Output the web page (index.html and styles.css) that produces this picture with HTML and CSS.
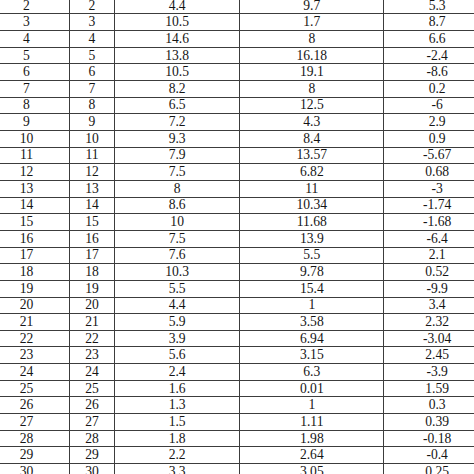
FILE: index.html
```html
<!DOCTYPE html>
<html>
<head>
<meta charset="utf-8">
<link rel="stylesheet" href="styles.css">
</head>
<body>
<div class="frame">
<table class="data">
<colgroup>
<col class="c1"><col class="c2"><col class="c3"><col class="c4"><col class="c5">
</colgroup>
<tbody>
<tr><td>2</td><td>2</td><td>4.4</td><td>9.7</td><td>5.3</td></tr>
<tr><td>3</td><td>3</td><td>10.5</td><td>1.7</td><td>8.7</td></tr>
<tr><td>4</td><td>4</td><td>14.6</td><td>8</td><td>6.6</td></tr>
<tr><td>5</td><td>5</td><td>13.8</td><td>16.18</td><td>-2.4</td></tr>
<tr><td>6</td><td>6</td><td>10.5</td><td>19.1</td><td>-8.6</td></tr>
<tr><td>7</td><td>7</td><td>8.2</td><td>8</td><td>0.2</td></tr>
<tr><td>8</td><td>8</td><td>6.5</td><td>12.5</td><td>-6</td></tr>
<tr><td>9</td><td>9</td><td>7.2</td><td>4.3</td><td>2.9</td></tr>
<tr><td>10</td><td>10</td><td>9.3</td><td>8.4</td><td>0.9</td></tr>
<tr><td>11</td><td>11</td><td>7.9</td><td>13.57</td><td>-5.67</td></tr>
<tr><td>12</td><td>12</td><td>7.5</td><td>6.82</td><td>0.68</td></tr>
<tr><td>13</td><td>13</td><td>8</td><td>11</td><td>-3</td></tr>
<tr><td>14</td><td>14</td><td>8.6</td><td>10.34</td><td>-1.74</td></tr>
<tr><td>15</td><td>15</td><td>10</td><td>11.68</td><td>-1.68</td></tr>
<tr><td>16</td><td>16</td><td>7.5</td><td>13.9</td><td>-6.4</td></tr>
<tr><td>17</td><td>17</td><td>7.6</td><td>5.5</td><td>2.1</td></tr>
<tr><td>18</td><td>18</td><td>10.3</td><td>9.78</td><td>0.52</td></tr>
<tr><td>19</td><td>19</td><td>5.5</td><td>15.4</td><td>-9.9</td></tr>
<tr><td>20</td><td>20</td><td>4.4</td><td>1</td><td>3.4</td></tr>
<tr><td>21</td><td>21</td><td>5.9</td><td>3.58</td><td>2.32</td></tr>
<tr><td>22</td><td>22</td><td>3.9</td><td>6.94</td><td>-3.04</td></tr>
<tr><td>23</td><td>23</td><td>5.6</td><td>3.15</td><td>2.45</td></tr>
<tr><td>24</td><td>24</td><td>2.4</td><td>6.3</td><td>-3.9</td></tr>
<tr><td>25</td><td>25</td><td>1.6</td><td>0.01</td><td>1.59</td></tr>
<tr><td>26</td><td>26</td><td>1.3</td><td>1</td><td>0.3</td></tr>
<tr><td>27</td><td>27</td><td>1.5</td><td>1.11</td><td>0.39</td></tr>
<tr><td>28</td><td>28</td><td>1.8</td><td>1.98</td><td>-0.18</td></tr>
<tr><td>29</td><td>29</td><td>2.2</td><td>2.64</td><td>-0.4</td></tr>
<tr><td>30</td><td>30</td><td>3.3</td><td>3.05</td><td>0.25</td></tr>
</tbody>
</table>
</div>
</body>
</html>
```
FILE: styles.css
```css
html, body {
  margin: 0;
  padding: 0;
  background: #ffffff;
}
body {
  width: 474px;
  height: 474px;
  overflow: hidden;
}
.frame {
  margin-top: -3.3px;
  margin-left: -17px;
}
.data {
  border-collapse: collapse;
  table-layout: fixed;
  width: 507px;
  font-family: "Liberation Serif", "Times New Roman", serif;
  font-size: 13.6px;
  color: #151515;
}
.c1 { width: 86px; }
.c2 { width: 45px; }
.c3 { width: 125.3px; }
.c4 { width: 144px; }
.c5 { width: 106.7px; }
.data tr {
  height: 16.667px;
}
.data td {
  border: 1px solid #3c3c3c;
  padding: 0;
  text-align: center;
  vertical-align: middle;
  line-height: 14px;
}
```
